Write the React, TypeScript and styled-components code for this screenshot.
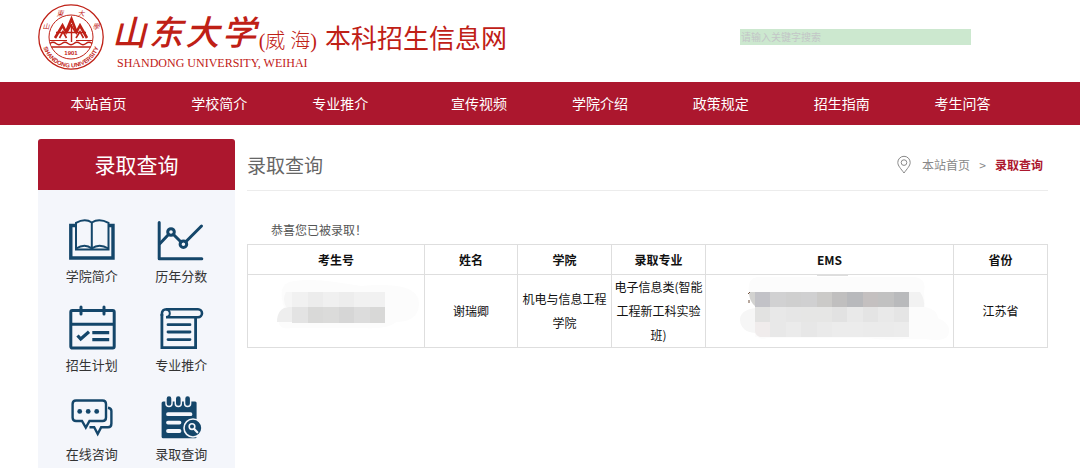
import React from "react";
import styled, { createGlobalStyle } from "styled-components";

const red = "#ac172e";
const logoRed = "#bf2016";
const navy = "#14466a";
const line = "#dedede";

const GlobalStyle = createGlobalStyle`
  * { box-sizing: border-box; }
  body {
    margin: 0;
    background: #fff;
    color: #111;
    font: 12px/24px "Noto Sans CJK SC", "Noto Sans", sans-serif;
  }
  a { color: inherit; text-decoration: none; }
  h1, h2, p, ul { margin: 0; padding: 0; }
`;

const Page = styled.div`
  display: flex;
  flex-direction: column;
  min-height: 100vh;
`;

const Header = styled.header`
  display: flex;
  align-items: flex-start;
  justify-content: space-between;
  height: 82px;
  padding: 4px 109px 0 38px;
`;

const Brand = styled.a`
  display: flex;
  gap: 8px;
  color: ${logoRed};
`;

const Wordmark = styled.div`
  display: flex;
  flex-direction: column;
  width: 205px;
`;

const WordRow = styled.div`
  display: flex;
  align-items: flex-end;
  justify-content: space-between;
  height: 51px;
`;

const Script = styled.span`
  font: italic 500 34px/48px "Noto Sans CJK SC", sans-serif;
`;

const Campus = styled.span`
  font: 20px/28px "Liberation Serif", "Noto Sans CJK SC", serif;
  font-weight: 300;
  white-space: nowrap;
`;

const English = styled.span`
  padding-left: 5px;
  font: 12px/16px "Liberation Serif", serif;
  white-space: nowrap;
`;

const SiteName = styled.h1`
  padding-top: 12px;
  font-size: 26px;
  font-weight: 400;
  line-height: 42px;
  white-space: nowrap;
`;

const Search = styled.input`
  width: 231px;
  height: 16px;
  margin-top: 25px;
  padding: 0 1px;
  border: 0;
  border-radius: 0;
  background: #cce8cf;
  font: 10px/16px "Noto Sans CJK SC", sans-serif;
  &::placeholder { color: #c3c6c7; opacity: 1; }
`;

const Nav = styled.nav`
  display: flex;
  gap: 18px;
  padding: 0 57px 0 38px;
  background: ${red};
`;

const NavGroup = styled.div<{ $count: number }>`
  display: flex;
  flex: ${(p) => p.$count} 1 0;
`;

const NavLink = styled.a`
  flex: 1 1 0;
  color: #fff;
  font-size: 14px;
  line-height: 43px;
  text-align: center;
`;

const Body = styled.div`
  display: flex;
  flex: 1;
  gap: 12px;
  padding: 14px 32px 0 38px;
`;

const Sidebar = styled.aside`
  flex: 0 0 197px;
  overflow: hidden;
  border-radius: 3px 3px 0 0;
  background: #f4f6fb;
`;

const SideTitle = styled.h2`
  background: ${red};
  color: #fff;
  font-size: 21px;
  font-weight: 400;
  line-height: 51px;
  text-align: center;
`;

const SideGrid = styled.div`
  display: grid;
  grid-template-columns: 1fr 1fr;
  row-gap: 17px;
  padding: 26px 9px 2px;
`;

const SideLink = styled.a`
  display: flex;
  flex-direction: column;
  align-items: center;
  color: #333;
  font-size: 13px;
  line-height: 24px;
`;

const Main = styled.main`
  flex: 1;
  min-width: 0;
`;

const TitleBar = styled.div`
  display: flex;
  align-items: center;
  justify-content: space-between;
  height: 52px;
  padding-right: 5px;
  border-bottom: 1px solid #ececec;
`;

const Title = styled.h2`
  color: #666;
  font-size: 19px;
  font-weight: 400;
`;

const Crumbs = styled.nav`
  display: flex;
  align-items: center;
  color: #888;
`;

const CrumbLink = styled.a`
  margin-left: 10px;
`;

const Separator = styled.span`
  width: 25px;
  text-align: center;
`;

const Current = styled.span`
  color: ${red};
  font-weight: 700;
`;

const Notice = styled.p`
  padding: 27px 0 2px 24px;
  color: #555;
`;

const Table = styled.table`
  width: 100%;
  table-layout: fixed;
  border-collapse: collapse;
`;

const Col = styled.col<{ $share: number }>`
  width: ${(p) => p.$share / 8}%;
`;

const Th = styled.th`
  height: 30px;
  padding: 0;
  border: 1px solid ${line};
  font-weight: 700;
  text-align: center;
`;

const Td = styled.td`
  height: 73px;
  padding: 0;
  border: 1px solid ${line};
  text-align: center;
`;

const Mosaic = styled.svg`
  display: block;
  margin: 0 auto;
  max-width: 100%;
`;

const Emblem = () => (
  <svg width="66" height="66" viewBox="0 0 66 66" fill="none" stroke={logoRed} aria-label="山东大学校徽">
    <circle cx="33" cy="33" r="32.2" strokeWidth="1.3" />
    <circle cx="33" cy="33" r="22" strokeWidth="1" />
    <path d="M17 34 L24.5 21.5 L28 28 L33.5 15 L38.5 28 L42 21.5 L49 34" strokeWidth="2.6" />
    <path d="M21.5 34 L25 27.5 L28.5 34 M38 34 L42 27.5 L45.5 34 M28.5 29 L33 21 L38 29" strokeWidth="1.6" />
    <path d="M18 28.5 H48 M33.5 20 V38" strokeWidth="1.4" />
    <path d="M12 36.5 H29 M38 36.5 H54" strokeWidth="1.2" />
    <path d="M12 39.5 q3 -2.5 6 0 t6 0 t6 0 t6 0 t6 0 t6 0 t6 0" strokeWidth="1.4" />
    <path d="M13.5 43 H52.5" strokeWidth="1.4" />
    <g fill={logoRed} stroke="none" textAnchor="middle">
      <text x="33" y="51" fontSize="6" fontFamily="Liberation Sans" fontWeight="700">1901</text>
      <g fontSize="7" fontStyle="italic" fontFamily="Noto Sans CJK SC">
        <text x="8" y="25">山</text>
        <text x="22" y="12">東</text>
        <text x="43" y="12">大</text>
        <text x="58" y="25">學</text>
      </g>
    </g>
    <path id="rimText" d="M3.6 34 A29.4 29.4 0 0 0 62.4 34" stroke="none" />
    <text fill={logoRed} stroke="none" fontSize="6" fontFamily="Liberation Sans" fontWeight="700" textAnchor="middle">
      <textPath href="#rimText" startOffset="50%">SHANDONG UNIVERSITY</textPath>
    </text>
  </svg>
);

const Icon = ({ children }: { children: React.ReactNode }) => (
  <svg width="48" height="48" viewBox="0 0 48 48" fill="none" stroke={navy} strokeWidth="3" aria-hidden="true">
    {children}
  </svg>
);

const BookIcon = () => (
  <Icon>
    <path d="M7 9.5 H2.8 V42 H45 V9.5 H41" strokeWidth="3.4" />
    <path d="M8 33.5 V6.8 Q17 2 23.8 6.5 Q31 2 40.5 6.8 V33.5 Z" strokeWidth="2" />
    <path d="M23.8 6.5 V33 M8 32.5 Q17 27 23.8 32.5 Q31 27 40.5 32.5" strokeWidth="2" />
  </Icon>
);

const ChartIcon = () => (
  <Icon>
    <path d="M2.2 6.5 V42.8 H44.8" strokeLinecap="round" strokeLinejoin="round" />
    <path d="M3 27.5 L11.5 18.5 M16.5 18.5 L24 26 M28.8 25.8 L44.5 10" strokeLinecap="round" />
    <circle cx="14" cy="16" r="3.3" />
    <circle cx="26.4" cy="28.2" r="3.3" />
  </Icon>
);

const CalendarIcon = () => (
  <Icon>
    <rect x="2.8" y="5.5" width="43.4" height="37.6" rx="1.5" />
    <path d="M3 19.3 H46" />
    <path d="M13 2 V9 M36 2 V9" strokeLinecap="round" />
    <path d="M9.5 30.5 L12.7 34 L21 26.8" strokeWidth="3.2" />
    <path d="M24.3 27.7 H41.2 M24.3 34.6 H41.2" strokeWidth="3.2" />
  </Icon>
);

const ScrollIcon = () => (
  <Icon>
    <path d="M4.9 9 V42.6 H38.6 V13" strokeWidth="2.8" />
    <path d="M4.9 11 V9 Q4.9 4.3 9.5 4.3 H41 A4 4 0 0 1 41 12.3 H9" strokeWidth="2.6" />
    <path d="M9 4.6 Q12.8 5 12.8 8.5 Q12.8 11.7 9 12" strokeWidth="2" />
    <path d="M11 19.7 H33 M11 27 H33 M11 34.6 H33" strokeWidth="2.8" strokeLinecap="round" />
  </Icon>
);

const ChatIcon = () => (
  <Icon>
    <path
      d="M8 6.5 H34.5 Q38 6.5 38 10 V23.5 Q38 27 34.5 27 H21.5 L17.8 33.5 L14 27 H8 Q4.6 27 4.6 23.5 V10 Q4.6 6.5 8 6.5 Z"
      strokeWidth="2.4"
    />
    <path d="M40 13.8 Q43.4 14.3 43.4 17 V29.5 Q43.4 33.3 40 33.3 H33.2 L29.7 40 L26.2 33.3 H21.5" strokeWidth="2.4" />
    <g fill={navy} stroke="none">
      <circle cx="11.7" cy="17.4" r="2.4" />
      <circle cx="20.2" cy="17.4" r="2.4" />
      <circle cx="28.7" cy="17.4" r="2.4" />
    </g>
  </Icon>
);

const NotepadIcon = () => (
  <Icon>
    <rect x="4.6" y="7.5" width="35" height="36.8" rx="1.5" fill={navy} stroke="none" />
    <path d="M12 4.5 V9.5 M21.3 4.5 V9.5 M30.6 4.5 V9.5" stroke="#f4f6fb" strokeWidth="7.5" strokeLinecap="round" />
    <path d="M12 4.5 V9.5 M21.3 4.5 V9.5 M30.6 4.5 V9.5" strokeWidth="4.6" strokeLinecap="round" />
    <path d="M11 20.2 H33.5 M11 28.6 H22.5 M11 37 H22.5" stroke="#f4f6fb" strokeWidth="3.8" strokeLinecap="round" />
    <circle cx="36" cy="34" r="9" fill={navy} stroke="#f4f6fb" strokeWidth="1.6" />
    <circle cx="35" cy="32.6" r="2.8" stroke="#f4f6fb" strokeWidth="1.6" />
    <path d="M37.2 35 L40.3 38.3" stroke="#f4f6fb" strokeWidth="2.2" strokeLinecap="round" />
  </Icon>
);

const PinIcon = () => (
  <svg width="16" height="20" viewBox="0 0 16 20" fill="none" stroke="#888" aria-hidden="true">
    <path d="M8 18 C5 13.8 1.8 10.8 1.8 7.5 A6.2 6.2 0 0 1 14.2 7.5 C14.2 10.8 11 13.8 8 18 Z" />
    <circle cx="8" cy="7.6" r="2.8" />
  </svg>
);

const NumberMosaic = () => {
  const top = ["#f1f1f1", "#ececec", "#f0f0f0", "#ededed", "#f1f1f1", "#f1f1f1"];
  const bottom = ["#e3e3e3", "#d9d9d8", "#dbdbda", "#d6d6d6", "#dcdcdc", "#d8d8d7"];
  return (
    <Mosaic width="176" height="72" viewBox="0 0 176 72" aria-hidden="true">
      <path
        d="M46 6 C70 3 90 8 114 11 C136 9 170 8 171 28 C171 44 158 47 148 47 C140 55 120 53 100 53 H44 C28 56 28 44 36 32 C32 18 32 8 46 6 Z"
        fill="#fcfcfc"
      />
      <path d="M44 17 H38 Q34 24 38 32 H44 Z" fill="#f6f6f6" />
      <path d="M44 32 H41 Q29 33 29 47 H44 Z" fill="#eeeeee" />
      {top.map((c, i) => (
        <rect key={i} x={44 + i * 15.5} y="17" width="15.5" height="15" fill={c} shapeRendering="crispEdges" />
      ))}
      {bottom.map((c, i) => (
        <rect key={i} x={44 + i * 15.5} y="32" width="15.5" height="16" fill={c} shapeRendering="crispEdges" />
      ))}
    </Mosaic>
  );
};

const EmsMosaic = () => {
  const rows = [
    ["#c2c2c7", "#d1d1d2", "#cfcfcf", "#d0d0d1", "#cbcac8", "#c0bfbf", "#b8b9bc", "#c4c0c0", "#c1c1c1", "#b9babc"],
    ["#e2e2e1", "#e8e8e8", "#e6e6e6", "#e6e6e5", "#e6e6e5", "#e2e2e2", "#e9e9e9", "#e4e4e4", "#e9e9e9", "#e5e5e5"],
    ["#f0ecec", "#e8e8e8", "#ebebeb", "#e7e7e7", "#eaeaea", "#ececec", "#ececec", "#ebebeb", "#ebebeb", "#ececec"],
  ];
  return (
    <Mosaic width="246" height="72" viewBox="0 0 246 72" aria-hidden="true">
      <path
        d="M50 2 H208 Q220 4 217 16 L218 32 Q230 34 231 43 Q247 50 240 62 Q234 67 218 64 H200 Q180 66 160 63 H60 Q52 66 48 58 Q33 54 33 45 Q33 36 48 33 L42 17 Q40 4 50 2 Z"
        fill="#fcfcfc"
      />
      <path d="M48 33 Q33 35 33 45 Q34 57 48 58 Z" fill="#f6f6f6" />
      <path d="M202 17 H213 Q218 24 217 32 H202 Z" fill="#f2f2f2" />
      <path d="M48 17 H43 L42 19 Q43 27 48 31 Z" fill="#d2d2d0" />
      <path d="M43 17 L41 19 M42 25 V28" fill="none" stroke="#70503d" />
      {rows.map((row, y) =>
        row.map((c, x) => (
          <rect
            key={`${x}-${y}`}
            x={48 + x * 15.4}
            y={17 + y * 15}
            width="15.4"
            height="15"
            fill={c}
            shapeRendering="crispEdges"
          />
        ))
      )}
      <path d="M48 57 V62 H53 Q49 61 48 57 Z" fill="#fcfcfc" />
      <path d="M110 0 H141 V1 H110 Z" fill="#dddddd" />
    </Mosaic>
  );
};

const sideItems = [
  { label: "学院简介", Glyph: BookIcon },
  { label: "历年分数", Glyph: ChartIcon },
  { label: "招生计划", Glyph: CalendarIcon },
  { label: "专业推介", Glyph: ScrollIcon },
  { label: "在线咨询", Glyph: ChatIcon },
  { label: "录取查询", Glyph: NotepadIcon },
];

const navGroups = [
  ["本站首页", "学校简介", "专业推介"],
  ["宣传视频", "学院介绍", "政策规定", "招生指南", "考生问答"],
];

// Shares are parts of 800.
const columns = [
  { name: "考生号", share: 177 },
  { name: "姓名", share: 93 },
  { name: "学院", share: 94 },
  { name: "录取专业", share: 94 },
  { name: "EMS", share: 248 },
  { name: "省份", share: 94 },
];

export default function App() {
  return (
    <Page>
      <GlobalStyle />
      <Header>
        <Brand href="#">
          <Emblem />
          <Wordmark>
            <WordRow>
              <Script>山</Script>
              <Script>东</Script>
              <Script>大</Script>
              <Script>学</Script>
              <Campus>(威 海)</Campus>
            </WordRow>
            <English>SHANDONG UNIVERSITY, WEIHAI</English>
          </Wordmark>
          <SiteName>本科招生信息网</SiteName>
        </Brand>
        <Search type="search" aria-label="搜索" placeholder="请输入关键字搜索" />
      </Header>
      <Nav>
        {navGroups.map((group) => (
          <NavGroup key={group[0]} $count={group.length}>
            {group.map((item) => (
              <NavLink key={item} href="#">{item}</NavLink>
            ))}
          </NavGroup>
        ))}
      </Nav>
      <Body>
        <Sidebar>
          <SideTitle>录取查询</SideTitle>
          <SideGrid>
            {sideItems.map(({ label, Glyph }) => (
              <SideLink key={label} href="#">
                <Glyph />
                {label}
              </SideLink>
            ))}
          </SideGrid>
        </Sidebar>
        <Main>
          <TitleBar>
            <Title>录取查询</Title>
            <Crumbs>
              <PinIcon />
              <CrumbLink href="#">本站首页</CrumbLink>
              <Separator>&gt;</Separator>
              <Current>录取查询</Current>
            </Crumbs>
          </TitleBar>
          <Notice>恭喜您已被录取！</Notice>
          <Table>
            <colgroup>
              {columns.map((c) => (
                <Col key={c.name} $share={c.share} />
              ))}
            </colgroup>
            <thead>
              <tr>
                {columns.map((c) => (
                  <Th key={c.name} scope="col">{c.name}</Th>
                ))}
              </tr>
            </thead>
            <tbody>
              <tr>
                <Td><NumberMosaic /></Td>
                <Td>谢瑞卿</Td>
                <Td>机电与信息工程学院</Td>
                <Td>电子信息类(智能工程新工科实验班)</Td>
                <Td><EmsMosaic /></Td>
                <Td>江苏省</Td>
              </tr>
            </tbody>
          </Table>
        </Main>
      </Body>
    </Page>
  );
}
